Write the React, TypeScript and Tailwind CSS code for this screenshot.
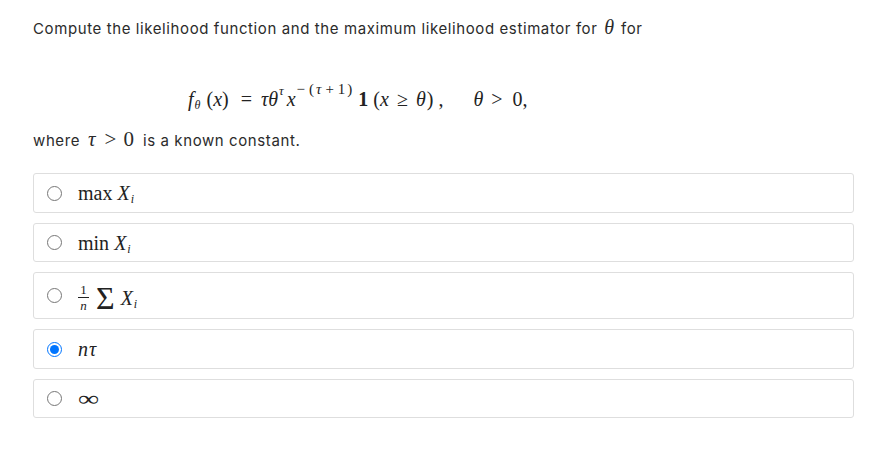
import React from 'react';

const M = ({ children, className = '' }: { children: React.ReactNode; className?: string }) => (
  <span className={`font-['Liberation_Serif',serif] tracking-normal ${className}`}>{children}</span>
);
const I = ({ children, className = '' }: { children: React.ReactNode; className?: string }) => (
  <i className={`italic ${className}`}>{children}</i>
);

const Option = ({ checked = false, h = 'h-[40px]', children }: { checked?: boolean; h?: string; children: React.ReactNode }) => (
  <label className={`flex items-center gap-[16px] border border-[#dedede] rounded-[3px] pl-[13px] ${h}`}>
    <input type="radio" name="ans" defaultChecked={checked} className="w-[15px] h-[15px] m-0 accent-[#0075ff]" />
    <div className="text-[20px] text-[#222] leading-none">{children}</div>
  </label>
);

export default function App() {
  return (
    <div className="w-[882px] h-[454px] bg-white px-[33px] pt-[15px] font-['Inter',sans-serif] text-[15px] tracking-[0.6px] text-[#2b2b2b]">
      <p className="leading-[24px]">
        Compute the likelihood function and the maximum likelihood estimator for{' '}
        <M className="text-[20px] italic ml-[2px] mr-[2px]">θ</M> for
      </p>

      {/* displayed formula */}
      <div className="mt-[43px] pl-[155px] h-[30px] flex items-center text-[20px] text-[#222] whitespace-nowrap">
        <M className="inline-flex items-baseline">
          <I>f</I>
          <sub className="text-[12px] italic ml-[1px]">θ</sub>
          <span className="ml-[6px]">(</span>
          <I>x</I>
          <span>)</span>
          <span className="ml-[12px]">=</span>
          <I className="ml-[9px]">τ</I>
          <I>θ</I>
          <sup className="text-[13px] italic ml-[1px] -top-[11px]">τ</sup>
          <I className="ml-[3px]">x</I>
          <sup className="text-[15px] tracking-[2px] ml-[1px] -top-[12px]">
            <span className="mr-[2px]">−</span>(<I>τ</I>
            <span className="mx-[2px]">+</span>1)
          </sup>
          <b className="font-bold ml-[4px]">1</b>
          <span className="ml-[5px]">(</span>
          <I>x</I>
          <span className="ml-[8px]">≥</span>
          <I className="ml-[8px]">θ</I>
          <span className="ml-[1px]">)</span>
          <span className="ml-[5px]">,</span>
          <I className="ml-[30px]">θ</I>
          <span className="ml-[8px]">&gt;</span>
          <span className="ml-[10px]">0</span>
          <span>,</span>
        </M>
      </div>

      <p className="mt-[13px] leading-[24px]">
        where
        <M className="text-[21px] ml-[8px]">
          <I>τ</I>
          <span className="ml-[9px] mr-[7px]">&gt;</span>0
        </M>
        <span className="ml-[9px]">is a known constant.</span>
      </p>

      <div className="mt-[20px] w-[821px] flex flex-col gap-[10px]">
        <Option>
          <M>max <I>X</I><sub className="text-[12px] italic ml-[1px]">i</sub></M>
        </Option>
        <Option h="h-[39px]">
          <M>min <I>X</I><sub className="text-[12px] italic ml-[1px]">i</sub></M>
        </Option>
        <Option h="h-[47px]">
          <M className="inline-flex items-center">
            <span className="inline-flex flex-col items-center text-[13px] leading-[13px] mr-[7px]">
              <span>1</span>
              <span className="border-t border-[#222] w-[11px] mt-[1px] mb-[1px]"></span>
              <I>n</I>
            </span>
            <span className="text-[32px] leading-none mr-[6px]">Σ</span>
            <span>
              <I>X</I>
              <sub className="text-[12px] italic ml-[1px]">i</sub>
            </span>
          </M>
        </Option>
        <Option checked>
          <M><I>n</I><I className="ml-[1px]">τ</I></M>
        </Option>
        <Option h="h-[39px]">
          <M className="inline-block text-[22px] scale-x-[1.35] origin-left">∞</M>
        </Option>
      </div>
    </div>
  );
}
